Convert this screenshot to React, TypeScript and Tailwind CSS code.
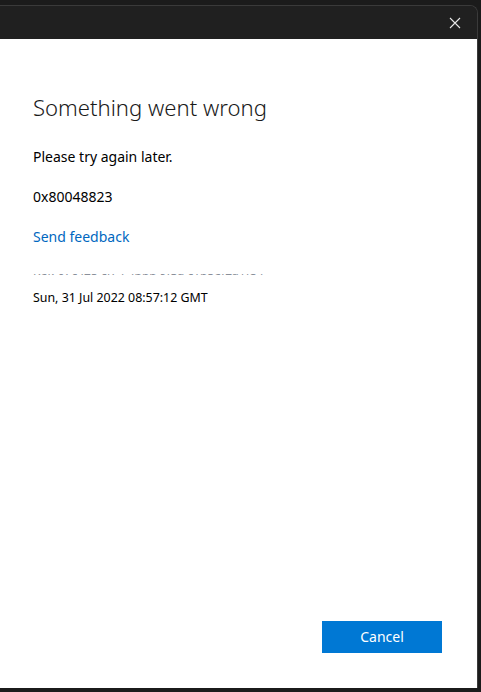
export default function App() {
  const font = { fontFamily: '"Segoe UI", "Noto Sans", "Open Sans", sans-serif' };
  return (
    <div
      className="w-[481px] h-[692px] bg-[#1b1b1b] overflow-hidden flex flex-col pt-[5px] pr-[3px] pb-[4px]"
      style={font}
    >
      <div className="flex-1 flex flex-col rounded-tr-[8px] border-t border-r border-[#3a3a3a] overflow-hidden">
        {/* Title bar */}
        <div className="h-[33px] bg-[#202020] flex items-center justify-end pr-[15px] shrink-0">
          <svg width="12" height="12" viewBox="0 0 12 12" className="mr-[1px]">
            <path d="M1 1 L11 11 M11 1 L1 11" stroke="#e6e6e6" strokeWidth="1.1" />
          </svg>
        </div>

        {/* Content */}
        <div className="flex-1 bg-white flex flex-col px-[33px]">
          <h1 className="mt-[52px] text-[22.1px] font-light leading-[32px] text-[#1a1a1a]">
            Something went wrong
          </h1>
          <p className="mt-[24px] text-[14px] leading-[20px] text-black">Please try again later.</p>
          <p className="mt-[20px] text-[14px] leading-[20px] text-black">0x80048823</p>
          <a className="mt-[20px] text-[14px] leading-[20px] text-[#0067c0]">Send feedback</a>
          <div className="mt-[27px] h-[3px] overflow-hidden w-[240px]">
            <div className="text-[12px] leading-[16px] -mt-[11px] text-[#8a8f99] whitespace-nowrap">
              Ref: 07c425 cf74 4bbb 9f3a c1b5ef2a1f84
            </div>
          </div>
          <p className="mt-[13px] text-[12.4px] leading-[16px] text-black">Sun, 31 Jul 2022 08:57:12 GMT</p>

          <div className="flex-1" />
          <div className="flex justify-end pb-[35px] pr-[2px]">
            <button className="w-[120px] h-[32px] bg-[#0078d4] text-white text-[14px] leading-[20px]">
              Cancel
            </button>
          </div>
        </div>
      </div>
    </div>
  );
}
